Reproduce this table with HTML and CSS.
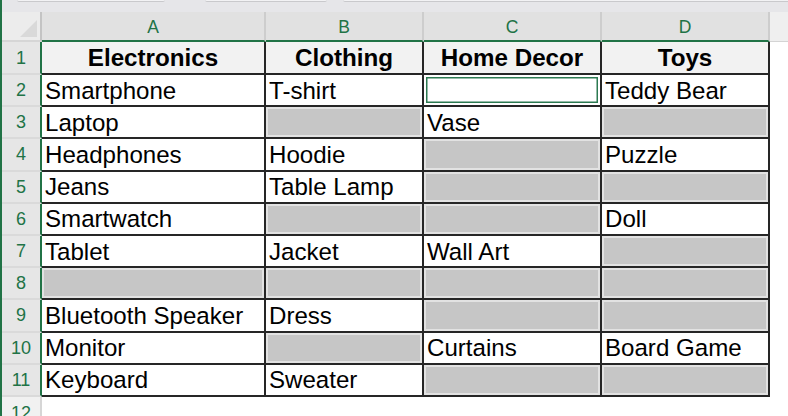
FILE: index.html
```html
<!DOCTYPE html>
<html>
<head>
<meta charset="utf-8">
<link rel="stylesheet" href="styles.css">
</head>
<body>
<div class="app">
  <div class="edge"></div>
  <div class="main">
    <div class="strip">
      <div class="namebox"></div>
      <div class="fxbox"></div>
      <div class="formula"></div>
    </div>
    <div class="sheet">
      <div class="corner"><span class="tri"></span></div>
      <div class="colhead">A</div>
      <div class="colhead">B</div>
      <div class="colhead">C</div>
      <div class="colhead">D</div>
      <div class="colhead rest"></div>

      <div class="rowhead">1</div>
      <div class="cell hdr">Electronics</div>
      <div class="cell hdr">Clothing</div>
      <div class="cell hdr">Home Decor</div>
      <div class="cell hdr">Toys</div>
      <div class="pad"></div>

      <div class="rowhead">2</div>
      <div class="cell">Smartphone</div>
      <div class="cell">T-shirt</div>
      <div class="cell active"></div>
      <div class="cell">Teddy Bear</div>
      <div class="pad"></div>

      <div class="rowhead">3</div>
      <div class="cell">Laptop</div>
      <div class="cell g"></div>
      <div class="cell">Vase</div>
      <div class="cell g"></div>
      <div class="pad"></div>

      <div class="rowhead">4</div>
      <div class="cell">Headphones</div>
      <div class="cell">Hoodie</div>
      <div class="cell g"></div>
      <div class="cell">Puzzle</div>
      <div class="pad"></div>

      <div class="rowhead">5</div>
      <div class="cell">Jeans</div>
      <div class="cell">Table Lamp</div>
      <div class="cell g"></div>
      <div class="cell g"></div>
      <div class="pad"></div>

      <div class="rowhead">6</div>
      <div class="cell">Smartwatch</div>
      <div class="cell g"></div>
      <div class="cell g"></div>
      <div class="cell">Doll</div>
      <div class="pad"></div>

      <div class="rowhead">7</div>
      <div class="cell">Tablet</div>
      <div class="cell">Jacket</div>
      <div class="cell">Wall Art</div>
      <div class="cell g"></div>
      <div class="pad"></div>

      <div class="rowhead">8</div>
      <div class="cell g"></div>
      <div class="cell g"></div>
      <div class="cell g"></div>
      <div class="cell g"></div>
      <div class="pad"></div>

      <div class="rowhead">9</div>
      <div class="cell">Bluetooth Speaker</div>
      <div class="cell">Dress</div>
      <div class="cell g"></div>
      <div class="cell g"></div>
      <div class="pad"></div>

      <div class="rowhead">10</div>
      <div class="cell">Monitor</div>
      <div class="cell g"></div>
      <div class="cell">Curtains</div>
      <div class="cell">Board Game</div>
      <div class="pad"></div>

      <div class="rowhead">11</div>
      <div class="cell">Keyboard</div>
      <div class="cell">Sweater</div>
      <div class="cell g"></div>
      <div class="cell g"></div>
      <div class="pad"></div>

      <div class="rowhead plain">12</div>
      <div class="blank"></div>
      <div class="blank"></div>
      <div class="blank"></div>
      <div class="blank"></div>
      <div class="blank"></div>
    </div>
  </div>
</div>
</body>
</html>
```

FILE: styles.css
```css
html, body {
  margin: 0;
  padding: 0;
  background: #ffffff;
  overflow: hidden;
}

.app {
  display: flex;
  width: 788px;
  height: 416px;
  font-family: "Liberation Sans", Arial, sans-serif;
}

.edge {
  width: 2px;
  flex: none;
  background: #217346;
}

.main {
  flex: 1;
  display: flex;
  flex-direction: column;
  min-width: 0;
}

.strip {
  height: 12px;
  flex: none;
  display: flex;
  align-items: flex-start;
  background: #e6e6e9;
}

.namebox {
  width: 148px;
  height: 1px;
  margin-left: 15px;
  background: #f2f2f4;
  border-bottom: 1px solid #c9c9cc;
  border-radius: 0 0 3px 3px;
}

.fxbox {
  width: 122px;
  height: 1px;
  margin-left: 40px;
  background: #f2f2f4;
  border-bottom: 1px solid #c9c9cc;
  border-radius: 0 0 3px 3px;
}

.formula {
  flex: 1;
  height: 1px;
  margin-left: 16px;
  background: #f2f2f4;
  border-bottom: 1px solid #c9c9cc;
  border-radius: 0 0 0 3px;
}

.sheet {
  flex: 1;
  display: grid;
  grid-template-columns: 40px 224px 158px 178px 168px 1fr;
  grid-template-rows: 30px 33px repeat(10, 32.2px) 1fr;
}

.corner {
  position: relative;
  background: #ececec;
  box-sizing: border-box;
  border-right: 2px solid #c4c4c4;
  border-bottom: 2px solid #d6d6d6;
}

.tri {
  position: absolute;
  right: 3px;
  bottom: 3px;
  width: 0;
  height: 0;
  border-left: 17px solid transparent;
  border-bottom: 17px solid #d9d9d9;
}

.colhead {
  background: #e1e1e1;
  color: #217346;
  font-size: 17.5px;
  display: flex;
  align-items: center;
  justify-content: center;
  padding-top: 2px;
  box-sizing: border-box;
  border-right: 2px solid #cdcdcd;
  border-bottom: 2px solid #217346;
}

.colhead.rest {
  background: #efefef;
  border-right: none;
  border-bottom: 1px solid #d4d4d4;
}

.rowhead {
  background: #e6e6e6;
  color: #217346;
  font-size: 18px;
  display: flex;
  align-items: center;
  justify-content: center;
  padding-top: 1px;
  box-sizing: border-box;
  border-right: 2px solid #217346;
  border-bottom: 2px solid #dadada;
}

.rowhead.plain {
  background: #f1f1f1;
  border-right: 2px solid #d6d6d6;
  border-bottom: none;
  align-items: flex-start;
  padding-top: 6px;
}

.cell {
  display: flex;
  align-items: center;
  padding-left: 3px;
  padding-top: 1px;
  font-size: 24.1px;
  color: #000000;
  white-space: nowrap;
  overflow: hidden;
  box-sizing: border-box;
  border-right: 2px solid #262626;
  border-bottom: 2px solid #262626;
  background: #ffffff;
}

.cell.hdr {
  background: #f2f2f2;
  font-weight: bold;
  font-size: 24.2px;
  justify-content: center;
  padding-left: 0;
}

.cell.g {
  background: #c6c6c6;
  box-shadow: inset 0 0 0 2px #e2e2e2;
}

.cell.active {
  box-shadow: inset 0 0 0 2px #ffffff, inset 0 0 0 3.5px #2c7a52;
}

.pad, .blank {
  background: #ffffff;
}
```
